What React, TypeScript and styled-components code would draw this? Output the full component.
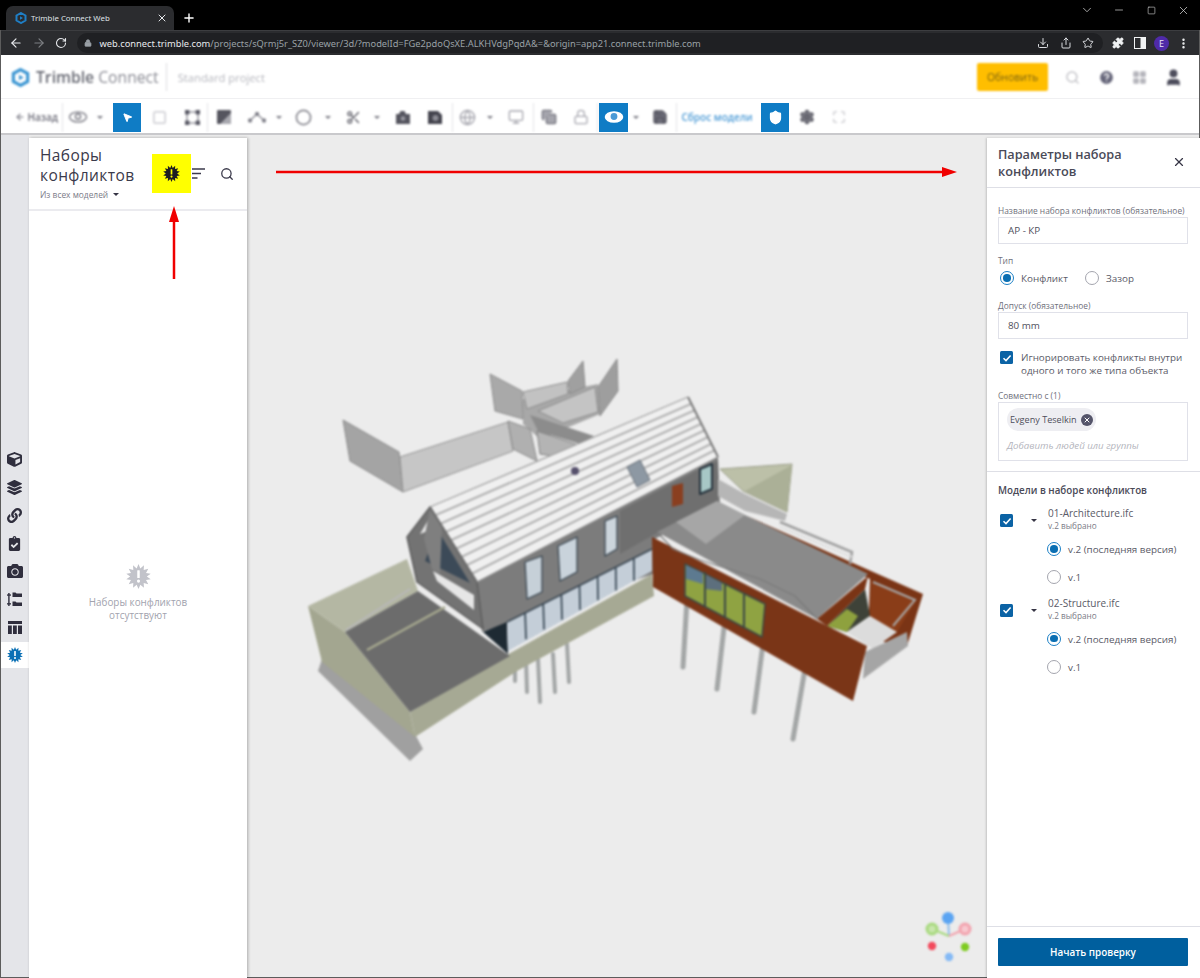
import React from 'react';
import styled, { createGlobalStyle } from 'styled-components';
import {
  ArrowLeft, ArrowRight, RotateCw, Lock, X, Plus, ChevronDown, Minus, Square, Star, Share, Download,
  Puzzle, EllipsisVertical, Search, MousePointer2, Shield, Scissors, Circle, Globe, Monitor,
  Copy, Save, Settings, Maximize, HelpCircle, User, LayoutGrid,
} from 'lucide-react';
import { FaCube, FaLayerGroup, FaLink, FaClipboardCheck, FaCamera } from 'react-icons/fa';

const Global = createGlobalStyle`
  html, body { margin: 0; padding: 0; background: #fff; }
  body { font-family: "Open Sans", "Noto Sans", sans-serif; color: #363545; }
  * { box-sizing: border-box; }
`;

const Page = styled.div`
  position: relative;
  width: 1200px;
  height: 978px;
  overflow: hidden;
  display: flex;
  flex-direction: column;
  &::after {
    content: '';
    position: absolute;
    inset: 30px 0 0 0;
    border: 1px solid #5c5c5c;
    border-top: 0;
    pointer-events: none;
  }
`;

/* ---------- browser chrome ---------- */
const TabStrip = styled.div`
  height: 30px;
  flex: none;
  background: #000;
  display: flex;
  align-items: flex-end;
  padding-left: 6px;
  color: #e8eaed;
`;
const Tab = styled.div`
  width: 168px;
  height: 24px;
  background: #2b2c2f;
  border-radius: 7px 7px 0 0;
  display: flex;
  align-items: center;
  padding: 0 6px 0 9px;
  gap: 4px;
  font-size: 7.85px;
  font-family: "Noto Sans", sans-serif;
`;
const TabTitle = styled.span`
  flex: 1;
  color: #dfe1e5;
`;
const NewTab = styled.div`
  width: 30px;
  height: 24px;
  display: flex;
  align-items: center;
  justify-content: center;
`;
const WindowButtons = styled.div`
  margin-left: auto;
  align-self: flex-start;
  height: 20px;
  display: flex;
  align-items: center;
  padding-right: 1px;
`;
const WinBtn = styled.div`
  width: 32px;
  display: flex;
  justify-content: center;
  color: #d4d4d4;
`;
const NavBar = styled.div`
  height: 25px;
  flex: none;
  background: #2b2c2f;
  border-top: 1px solid #3c3d40;
  display: flex;
  align-items: center;
  padding-left: 5px;
  color: #e8eaed;
`;
const NavBtn = styled.div<{ $dim?: boolean }>`
  width: 22.5px;
  display: flex;
  justify-content: center;
  color: ${(p) => (p.$dim ? '#7d7f83' : '#e8eaed')};
`;
const Omni = styled.div`
  margin: 0 4px;
  width: 1026px;
  height: 20px;
  background: #1f2023;
  border-radius: 10px;
  display: flex;
  align-items: center;
  padding: 0 3px 0 7px;
  font-size: 9.3px;
  font-family: "Noto Sans", sans-serif;
`;
const LockSlot = styled.span`
  display: flex;
  margin-right: 8px;
`;
const UrlText = styled.span`
  flex: 1;
  color: #9aa0a6;
  white-space: nowrap;
  b { color: #e8eaed; font-weight: 400; }
`;
const OmniIcon = styled.div`
  width: 22.5px;
  display: flex;
  justify-content: center;
  color: #dadce0;
`;
const Avatar = styled.div`
  width: 15px;
  height: 15px;
  border-radius: 50%;
  background: #4f2aa8;
  color: #e8e3f7;
  font-size: 9px;
  display: flex;
  align-items: center;
  justify-content: center;
`;
const ChromeEnd = styled.div`
  width: 22px;
  display: flex;
  justify-content: center;
  color: #f1f3f4;
`;

/* ---------- blurred application header ---------- */
const AppHeader = styled.div`
  height: 44px;
  background: #fff;
  display: flex;
  align-items: center;
  padding: 1px 10px 0 11px;
  border-bottom: 1px solid #f0f0f2;
  flex: none;
`;
const Soft = styled.div`
  display: flex;
  align-items: center;
  filter: blur(1.1px);
`;
const Brand = styled.span`
  font-size: 15.7px;
  color: #8a8b94;
  margin-left: 6px;
  white-space: nowrap;
  b { font-weight: 600; color: #686a74; }
`;
const BrandDivider = styled.span`
  width: 1px;
  height: 28px;
  background: #dedee2;
  margin: 0 11px 0 7px;
`;
const ProjectName = styled.span`
  font-size: 11.2px;
  color: #b4b5bc;
  white-space: nowrap;
`;
const HeaderRight = styled(Soft)`
  margin-left: auto;
`;
const Upgrade = styled.div`
  width: 71px;
  height: 28px;
  background: #ffbe00;
  border-radius: 2px;
  color: #7a6212;
  font-size: 10.5px;
  display: flex;
  align-items: center;
  justify-content: center;
  margin-right: 8px;
`;
const HeaderIcon = styled.div`
  width: 33.5px;
  display: flex;
  justify-content: center;
  color: #63636f;
`;

/* ---------- blurred toolbar ---------- */
const ToolBar = styled.div`
  height: 36px;
  flex: none;
  background: #fff;
  border-bottom: 2px solid #c9c9cc;
  display: flex;
  align-items: center;
  padding: 2px 0 0 11px;
`;
const ToolCell = styled.div<{ $w: number; $on?: boolean; $sep?: boolean }>`
  width: ${(p) => p.$w}px;
  height: 29px;
  flex: none;
  display: flex;
  align-items: center;
  justify-content: center;
  filter: blur(${(p) => (p.$on ? 0.7 : 1)}px);
  color: ${(p) => (p.$on ? '#fff' : '#6c6c78')};
  background: ${(p) => (p.$on ? '#0f7cc5' : 'transparent')};
  box-shadow: ${(p) => (p.$sep ? '1px 0 0 #e4e4e8' : 'none')};
  font-size: 10px;
`;
const ToolText = styled.span<{ $blue?: boolean }>`
  font-weight: 600;
  white-space: nowrap;
  color: ${(p) => (p.$blue ? '#4d9bd6' : '#6c6c78')};
`;
const MiniCaret = styled.span<{ $color?: string; $size?: number }>`
  display: inline-block;
  width: 0;
  height: 0;
  border-left: ${(p) => p.$size ?? 3.5}px solid transparent;
  border-right: ${(p) => p.$size ?? 3.5}px solid transparent;
  border-top: ${(p) => p.$size ?? 3.5}px solid ${(p) => p.$color ?? '#7a7a84'};
`;

/* ---------- workspace ---------- */
const Main = styled.div`
  flex: 1;
  min-height: 0;
  display: flex;
  background: #ececec;
`;
const Rail = styled.nav`
  width: 29px;
  flex: none;
  background: #e4e5e9;
  padding-top: 310px;
  display: flex;
  flex-direction: column;
`;
const RailItem = styled.div<{ $on?: boolean }>`
  height: ${(p) => (p.$on ? 26 : 28)}px;
  margin-top: ${(p) => (p.$on ? 1 : 0)}px;
  display: flex;
  align-items: center;
  justify-content: center;
  color: ${(p) => (p.$on ? '#0b70b5' : '#2f2e3d')};
  background: ${(p) => (p.$on ? '#fff' : 'transparent')};
`;
const LeftPanel = styled.aside`
  width: 218px;
  flex: none;
  margin-top: 3px;
  background: #fff;
  box-shadow: 1px 0 3px rgba(0, 0, 0, 0.28);
  display: flex;
  flex-direction: column;
  z-index: 1;
`;
const LeftHead = styled.header`
  height: 73px;
  flex: none;
  border-bottom: 2px solid #ebebef;
  padding: 7px 0 0 11px;
  display: flex;
`;
const LeftTitles = styled.div`
  width: 112px;
  flex: none;
`;
const LeftTitle = styled.h1`
  margin: 0;
  font-size: 15.5px;
  line-height: 20px;
  font-weight: 500;
  letter-spacing: 0.4px;
  color: #3b3a4b;
`;
const Scope = styled.div`
  margin-top: 4px;
  font-size: 8.4px;
  line-height: 11px;
  color: #7b7b88;
  display: flex;
  align-items: center;
  gap: 5px;
  white-space: nowrap;
`;
const Highlight = styled.div`
  width: 39px;
  height: 39px;
  flex: none;
  background: #ffff00;
  display: flex;
  align-items: center;
  justify-content: center;
  color: #1d1d22;
  margin-top: 9px;
`;
const HeadIcon = styled.div<{ $w: number }>`
  width: ${(p) => p.$w}px;
  flex: none;
  height: 39px;
  margin-top: 9px;
  color: #3b3a4b;
  display: flex;
  align-items: center;
  justify-content: center;
`;
const Empty = styled.div`
  flex: 1;
  display: flex;
  flex-direction: column;
  align-items: center;
  justify-content: center;
  padding-bottom: 4px;
  gap: 7px;
  color: #c2c3ca;
`;
const EmptyText = styled.div`
  font-size: 9.9px;
  line-height: 13px;
  text-align: center;
  color: #a2a3ae;
`;
const Viewer = styled.main`
  flex: 1;
  min-width: 0;
  background: #ececec;
`;
const Scene = styled.svg`
  display: block;
  width: 100%;
  height: 100%;
`;
const Blurred = styled.g<{ $r?: number }>`
  filter: blur(${(p) => p.$r ?? 1.1}px);
`;

/* ---------- right panel ---------- */
const RightPanel = styled.aside`
  width: 213px;
  flex: none;
  margin-top: 3px;
  background: #fff;
  box-shadow: -1px 0 2px rgba(0, 0, 0, 0.18);
  display: flex;
  flex-direction: column;
  z-index: 1;
`;
const RightHead = styled.header`
  height: 50px;
  flex: none;
  border-bottom: 1px solid #dedfe6;
  padding: 8px 14px 0 11px;
  display: flex;
  justify-content: space-between;
`;
const RightTitle = styled.h2`
  margin: 0;
  font-size: 12.7px;
  line-height: 17px;
  font-weight: 600;
  color: #4a4a58;
`;
const CloseBtn = styled.div`
  padding-top: 6px;
  color: #363545;
`;
const Form = styled.section`
  flex: none;
  height: 284px;
  border-bottom: 1px solid #dedfe6;
  padding: 17px 12px 0 11px;
  display: flex;
  flex-direction: column;
`;
const Label = styled.label<{ $top?: number }>`
  display: block;
  font-size: 8.4px;
  line-height: 12px;
  color: #6f707c;
  white-space: nowrap;
  margin-top: ${(p) => p.$top ?? 0}px;
`;
const Input = styled.div`
  height: 27px;
  flex: none;
  border: 1px solid #e0e1e9;
  padding-left: 9px;
  font-size: 9.8px;
  display: flex;
  align-items: center;
  color: #4f4f5c;
`;
const RadioRow = styled.div`
  margin-top: 3px;
  display: flex;
  height: 16px;
  flex: none;
  align-items: center;
  padding-left: 2px;
`;
const RadioItem = styled.div<{ $w?: number }>`
  display: flex;
  align-items: center;
  gap: 7px;
  width: ${(p) => (p.$w ? p.$w + 'px' : 'auto')};
  font-size: 9.85px;
  color: #5a5a67;
  white-space: nowrap;
`;
const Radio = styled.span<{ $on?: boolean }>`
  width: 14px;
  height: 14px;
  flex: none;
  border-radius: 50%;
  border: 1.4px solid ${(p) => (p.$on ? '#1b80c6' : '#a4a5ae')};
  background: #fff;
  display: flex;
  align-items: center;
  justify-content: center;
  &::before {
    content: '';
    width: 7.5px;
    height: 7.5px;
    border-radius: 50%;
    background: ${(p) => (p.$on ? '#0b6fb3' : 'transparent')};
  }
`;
const Check = styled.span`
  width: 13px;
  height: 13px;
  flex: none;
  background: #0b63a5;
  border-radius: 1.5px;
  color: #fff;
  display: flex;
  align-items: center;
  justify-content: center;
`;
const IgnoreRow = styled.div`
  display: flex;
  gap: 8px;
  margin-top: 12px;
  padding-left: 2px;
`;
const IgnoreText = styled.div`
  font-size: 9.8px;
  line-height: 13px;
  color: #5a5a67;
  white-space: nowrap;
`;
const ShareBox = styled.div`
  height: 59px;
  flex: none;
  border: 1px solid #e0e1e9;
  padding: 5px 8px 0;
`;
const Chip = styled.div`
  width: 89px;
  height: 23px;
  border-radius: 12px;
  background: #eeeef2;
  display: flex;
  align-items: center;
  justify-content: space-between;
  padding: 0 3px 0 3px;
  font-size: 9.1px;
  color: #4f4f5c;
  white-space: nowrap;
`;
const ChipClose = styled.span`
  width: 12px;
  height: 12px;
  border-radius: 50%;
  background: #55556a;
  color: #fff;
  display: flex;
  align-items: center;
  justify-content: center;
`;
const Placeholder = styled.div`
  margin-top: 8px;
  font-size: 9.7px;
  font-style: italic;
  color: #b4b5bd;
  line-height: 13px;
  white-space: nowrap;
`;
const Models = styled.section`
  flex: 1;
  padding: 12px 11px 0;
`;
const ModelsTitle = styled.h3`
  margin: 0 0 8px;
  font-size: 9.8px;
  line-height: 14px;
  font-weight: 600;
  color: #4a4a58;
`;
const ModelBlock = styled.div`
  height: 89.5px;
`;
const ModelRow = styled.div`
  height: 29px;
  display: flex;
  align-items: center;
  padding-left: 2px;
`;
const CaretSlot = styled.div`
  width: 35px;
  padding-left: 18px;
  display: flex;
`;
const ModelName = styled.div`
  font-size: 10px;
  line-height: 13px;
  color: #5a5a67;
  white-space: nowrap;
  margin-top: -3px;
`;
const ModelSub = styled.div`
  font-size: 8.2px;
  line-height: 11px;
  color: #7a7b86;
`;
const VersionRow = styled.div`
  height: 28px;
  padding-left: 49px;
  display: flex;
  align-items: center;
`;
const Footer = styled.footer`
  height: 52px;
  flex: none;
  border-top: 1px solid #dedfe6;
  padding: 11px 12px 0 11px;
`;
const Primary = styled.div`
  height: 28px;
  background: #005f9e;
  border-radius: 1px;
  color: #fff;
  font-size: 9.9px;
  font-weight: 600;
  display: flex;
  align-items: center;
  justify-content: center;
`;
const Annotation = styled.svg`
  position: absolute;
  left: 0;
  top: 0;
  width: 1200px;
  height: 978px;
  pointer-events: none;
  z-index: 5;
`;

/* ---------- drawings ---------- */
const burst = (() => {
  const pts: string[] = [];
  const n = 14;
  for (let i = 0; i < n * 2; i++) {
    const r = i % 2 ? 8 : 12;
    const a = (Math.PI * i) / n;
    pts.push(`${(12 + r * Math.sin(a)).toFixed(2)},${(12 - r * Math.cos(a)).toFixed(2)}`);
  }
  return pts.join(' ');
})();

const ConflictIcon = ({ size, bang = '#fff' }: { size: number; bang?: string }) => (
  <svg width={size} height={size} viewBox="0 0 24 24" fill="currentColor">
    <polygon points={burst} />
    <rect x="10.8" y="6" width="2.4" height="7.5" rx="0.5" fill={bang} />
    <circle cx="12" cy="16.4" r="1.5" fill={bang} />
  </svg>
);

const HexLogo = ({ size, color }: { size: number; color: string }) => (
  <svg width={size} height={size} viewBox="0 0 24 24">
    <polygon points="12,2 21,7 21,17 12,22 3,17 3,7" fill="none" stroke={color} strokeWidth="4" />
    <polygon points="10,8.5 16,12 10,15.5" fill={color} />
  </svg>
);

const SortIcon = () => (
  <svg width="15" height="13" viewBox="0 0 15 13" stroke="currentColor" strokeWidth="1.4">
    <path d="M0 2h13M0 6.5h9M0 11h5.5" />
  </svg>
);

const TreeIcon = () => (
  <svg width="17" height="17" viewBox="0 0 17 17" fill="currentColor">
    <rect x="2.2" y="2" width="1.4" height="13" />
    <rect x="1" y="3.4" width="4" height="1.3" />
    <rect x="1" y="12.2" width="4" height="1.3" />
    <path d="M6.5 1.5h3l1 1H16V6H6.5zM6.5 10.5h3l1 1H16V15H6.5z" />
  </svg>
);

const TableIcon = () => (
  <svg width="16" height="15" viewBox="0 0 16 15" fill="currentColor">
    <rect x="1" y="1" width="14" height="3" />
    <rect x="1" y="5.5" width="3.8" height="8.5" />
    <rect x="6" y="5.5" width="3.8" height="8.5" />
    <rect x="11" y="5.5" width="4" height="8.5" />
  </svg>
);

const SidePanelIcon = () => (
  <svg width="12" height="12" viewBox="0 0 12 12">
    <rect x="0.5" y="0.5" width="11" height="11" fill="none" stroke="#f1f3f4" />
    <rect x="6.5" y="0.5" width="5" height="11" fill="#f1f3f4" />
  </svg>
);

const Tick = () => (
  <svg width="10" height="10" viewBox="0 0 10 10" fill="none" stroke="#fff" strokeWidth="1.5">
    <path d="M1.5 5.2l2.5 2.4 4.6-5" />
  </svg>
);

/* toolbar glyphs */
const ViewIcon = ({ fill = 'none', stroke = '#8b8b93', pupil = 'none' }: { fill?: string; stroke?: string; pupil?: string }) => (
  <svg width="20" height="14" viewBox="0 0 20 14" fill={fill} stroke={stroke} strokeWidth="1.6">
    <ellipse cx="10" cy="7" rx="8.5" ry="5" />
    <circle cx="10" cy="6.5" r="2.6" fill={pupil} stroke={pupil === 'none' ? stroke : pupil} />
  </svg>
);
const FrameIcon = () => (
  <svg width="17" height="17" viewBox="0 0 17 17" fill="#5a5a66">
    <rect x="3" y="3" width="11" height="11" fill="none" stroke="#9b9ba3" strokeWidth="1.5" />
    <rect x="1" y="1" width="4.4" height="4.4" />
    <rect x="11.6" y="1" width="4.4" height="4.4" />
    <rect x="1" y="11.6" width="4.4" height="4.4" />
    <rect x="11.6" y="11.6" width="4.4" height="4.4" />
  </svg>
);
const ShadeIcon = () => (
  <svg width="16" height="16" viewBox="0 0 16 16">
    <rect x="1" y="1" width="14" height="14" rx="1" fill="#55555f" />
    <polygon points="15,4 15,15 4,15" fill="#a9a9b0" />
  </svg>
);
const MeasureIcon = () => (
  <svg width="18" height="12" viewBox="0 0 18 12" fill="#6c6c78" stroke="#8e8e96" strokeWidth="1.3">
    <path d="M2 9.5L9 3l7 6.5" fill="none" />
    <circle cx="2" cy="9.5" r="1.6" />
    <circle cx="9" cy="3" r="1.6" />
    <circle cx="16" cy="9.5" r="1.6" />
  </svg>
);
const CameraBlob = () => (
  <svg width="16" height="16" viewBox="0 0 16 16" fill="#55555f">
    <path d="M1 5h3l1.5-3h4L11 5h4v10H1z" />
    <circle cx="8" cy="9.5" r="2.2" fill="#9a9aa2" />
  </svg>
);
const SheetBlob = () => (
  <svg width="16" height="16" viewBox="0 0 16 16">
    <path d="M1 2h10l4 4v9H1z" fill="#44444e" />
    <circle cx="8.5" cy="9" r="3" fill="#8b8b94" />
  </svg>
);

const lerp = (a: number[], b: number[], t: number) => [a[0] + (b[0] - a[0]) * t, a[1] + (b[1] - a[1]) * t];
const A = [430, 508];
const B = [688, 398];
const C = [718, 458];
const D = [477, 583];
const stripes = Array.from({ length: 8 }, (_, i) => {
  const t = (i + 1) / 9;
  return { p: lerp(A, D, t), q: lerp(B, C, t) };
});
const glassBars = Array.from({ length: 7 }, (_, i) => {
  const t = (i + 1) / 8;
  return { p: lerp([507, 623], [652, 550], t), q: lerp([508, 650], [652, 572], t) };
});

const Poly = ({ d, f, s, w }: { d: string; f: string; s?: string; w?: number }) => (
  <polygon points={d} fill={f} stroke={s ?? 'none'} strokeWidth={w ?? 0} strokeLinejoin="round" />
);

const Pillar = ({ x1, y1, x2, y2, w = 4 }: { x1: number; y1: number; x2: number; y2: number; w?: number }) => (
  <line x1={x1} y1={y1} x2={x2} y2={y2} stroke="#a3a6a6" strokeWidth={w} strokeLinecap="round" />
);

const Building = () => (
  <Blurred $r={1.15}>
    {/* detached walls */}
    <Poly d="523,400 598,385 600,415 540,440 523,425" f="#a8a8a8" />
    <Poly d="490,375 522,392 523,420 495,412" f="#a9a9a9" s="#8e8e8e" w={1} />
    <Poly d="523,393 567,383 568,395 527,410" f="#c2c2c2" s="#8e8e8e" w={1} />
    <Poly d="568,382 583,362 585,388 570,395" f="#a0a0a0" s="#8a8a8a" w={1} />
    <Poly d="538,412 595,388 598,413 563,424" f="#c4c4c4" s="#8e8e8e" w={1} />
    <Poly d="598,388 617,360 618,392 600,417" f="#9e9e9e" s="#8a8a8a" w={1} />
    <Poly d="530,416 594,437 580,445 538,432" f="#8c8c8c" />
    <Poly d="537,432 578,446 560,458 540,455" f="#b4b4b4" s="#808080" w={1} />
    <Poly d="343,421 399,453 403,493 350,462" f="#a4a4a4" s="#8b8b8b" w={1} />
    <Poly d="400,458 508,423 513,452 403,493" f="#c6c6c6" s="#939393" w={1} />
    <Poly d="508,422 530,430 537,462 513,450" f="#b0b0b0" s="#8b8b8b" w={1} />

    {/* deck */}
    <Poly d="322,660 415,735 423,750 410,762 318,672" f="#a0a0a0" />
    <Pillar x1={515} y1={660} x2={515} y2={682} />
    <Pillar x1={526} y1={660} x2={527} y2={693} />
    <Pillar x1={538} y1={660} x2={540} y2={703} />
    <Pillar x1={553} y1={655} x2={555} y2={693} />
    <Pillar x1={567} y1={645} x2={569} y2={683} />
    <Poly d="410,713 505,657 652,575 654,597 517,672 415,738" f="#a6a994" />
    <Poly d="308,607 345,633 410,713 415,738 322,663" f="#a3a690" />
    <Poly d="308,607 407,560 418,592 345,633" f="#b4b7a3" />
    <Poly d="345,633 418,592 510,657 410,713" f="#6c6c6c" />
    <line x1="367" y1="651" x2="445" y2="608" stroke="#a6a88f" strokeWidth="2.5" />
    <line x1="346" y1="631" x2="410" y2="590" stroke="#b8b8b8" strokeWidth="2" />

    {/* house */}
    <Poly d="477,583 718,458 720,505 655,540 653,575 482,633" f="#7c7c7c" />
    <Poly d="430,508 407,538 417,583 483,630 477,583" f="#737373" s="#5e5e5e" w={1.5} />
    <Poly d="437,530 470,584 425,562" f="#3c4a58" />
    <Poly d="420,535 430,518 438,528" f="#e8e8e8" />
    <Poly d="433,572 474,596 474,611 437,582" f="#e6e6e6" />
    <Poly d="430,510 424,540 432,570 440,575 442,528" f="#7f7f7f" />
    <Poly d="483,633 507,623 508,655" f="#1e2a33" />
    <Poly d="507,623 652,550 652,572 508,652" f="#c4ced8" />
    {glassBars.map((b, i) => (
      <line key={i} x1={b.p[0]} y1={b.p[1]} x2={b.q[0]} y2={b.q[1]} stroke="#2f3f4c" strokeWidth="1.6" />
    ))}
    <line x1="507" y1="623" x2="652" y2="550" stroke="#3b4853" strokeWidth="1.5" />
    <Poly d="525,563 542,557 542,593 527,600" f="#c6d0d8" s="#37444f" w={1.2} />
    <Poly d="558,547 577,538 577,573 560,582" f="#c9d3db" s="#37444f" w={1.2} />
    <Poly d="605,522 617,517 617,550 605,557" f="#ccd5dc" s="#37444f" w={1.2} />
    <Poly d="620,512 700,470 718,462 718,505 655,535 620,555" f="#6f6f6f" />
    <Poly d="700,470 712,465 712,490 700,495" f="#a7c7c6" s="#26333d" w={2} />
    <Poly d="672,487 683,484 683,505 672,508" f="#8a3f20" />

    {/* roof */}
    <Poly d="430,508 688,398 718,458 477,583" f="#f0f0f0" />
    {stripes.map((s, i) => (
      <line key={i} x1={s.p[0]} y1={s.p[1]} x2={s.q[0]} y2={s.q[1]} stroke="#b4b4b4" strokeWidth="2.2" />
    ))}
    <line x1={A[0]} y1={A[1]} x2={B[0]} y2={B[1]} stroke="#a2a2a2" strokeWidth="1.3" />
    <line x1={B[0]} y1={B[1]} x2={C[0]} y2={C[1]} stroke="#777" strokeWidth="2" />
    <line x1={A[0]} y1={A[1]} x2={D[0]} y2={D[1]} stroke="#6c6c6c" strokeWidth="2" />
    <line x1={D[0]} y1={D[1]} x2={C[0]} y2={C[1]} stroke="#8f8f8f" strokeWidth="1.4" />
    <circle cx="575" cy="472" r="4" fill="#56506c" />
    <Poly d="627,468 640,461 650,481 637,488" f="#8d98a3" s="#6c737b" w={1} />

    {/* extension */}
    <Poly d="720,470 792,465 787,513 743,492" f="#bcc0a8" s="#9a9d89" w={1} />
    <Poly d="792,466 745,492 787,513" f="#abb097" />
    <Poly d="718,480 745,495 787,515 785,522 745,512 718,497" f="#b6b6b6" />
    <Pillar x1={687} y1={600} x2={683} y2={668} w={5} />
    <Pillar x1={725} y1={620} x2={717} y2={690} w={5} />
    <Pillar x1={763} y1={645} x2={754} y2={713} w={5} />
    <Pillar x1={805} y1={670} x2={793} y2={740} w={5} />
    <Poly d="747,517 923,595 907,647 868,640 870,580" f="#7a3415" />
    <Poly d="871,582 915,603 897,633 870,617" f="#8a3d18" />
    <Poly d="827,627 865,590 870,617 847,633" f="#3e4238" />
    <Poly d="827,627 847,610 858,617 847,633" f="#8ea13e" />
    <Poly d="847,633 870,617 897,633 873,650" f="#dcdcdc" />
    <Poly d="865,653 907,633 908,647 863,680" f="#a5a5a5" />
    <Poly d="657,533 717,502 747,517 868,575 817,620" f="#8a8a8a" />
    <Poly d="676,523 717,502 745,516 706,545" f="#a6a6a6" />
    <Poly d="817,620 868,577 865,590 827,627" f="#7a3415" />
    <Poly d="652,538 867,647 853,702 653,588" f="#7a3517" />
    <Poly d="685,565 765,605 762,638 685,597" f="#8fa342" s="#3d4a44" w={1.5} />
    <Poly d="686,566 703,574 703,585 686,580" f="#5d7a90" />
    <Poly d="705,575 722,584 722,592 705,590" f="#5d6f7d" />
    <line x1="705" y1="573" x2="705" y2="608" stroke="#3d4a44" strokeWidth="2" />
    <line x1="725" y1="584" x2="725" y2="618" stroke="#3d4a44" strokeWidth="2" />
    <line x1="744" y1="594" x2="744" y2="628" stroke="#3d4a44" strokeWidth="2" />
    <polyline points="657,533 673,550 700,561 760,580 795,597 817,620" fill="none" stroke="#7a7a7a" strokeWidth="1.2" />
    <polyline points="780,523 852,553 850,565" fill="none" stroke="#a0a0a0" strokeWidth="2.5" />
    <line x1="780" y1="528" x2="852" y2="558" stroke="#dfdfdf" strokeWidth="1.5" />
    <polyline points="873,583 915,601 893,627" fill="none" stroke="#a8a8a8" strokeWidth="2" />
  </Blurred>
);

const ConnectLogo = () => (
  <Blurred $r={1}>
    <path d="M949 937L948 919" stroke="#8dbcec" strokeWidth="2" />
    <path d="M949 937L932 930" stroke="#a8d97f" strokeWidth="2" />
    <path d="M949 937L965 930" stroke="#f2a3ae" strokeWidth="2" />
    <circle cx="948" cy="919" r="6" fill="#5ba4f2" />
    <circle cx="932" cy="930" r="5" fill="#c8e6ac" stroke="#a8d97f" strokeWidth="3" />
    <circle cx="965" cy="930" r="5" fill="#f7c8cf" stroke="#f2a3ae" strokeWidth="3" />
    <circle cx="932" cy="947" r="4.2" fill="#f24a5c" />
    <circle cx="965" cy="948" r="4.2" fill="#7ecb20" />
    <circle cx="949" cy="958" r="4.2" fill="#84b9f5" />
  </Blurred>
);

type Tool = { w: number; node?: React.ReactNode; on?: boolean; sep?: boolean };
const ti = { size: 15, strokeWidth: 2 };
const caret: React.ReactNode = <MiniCaret />;
const tools: Tool[] = [
  { w: 51, sep: true, node: <><ArrowLeft size={10} strokeWidth={2.5} /><ToolText>&nbsp;Назад</ToolText></> },
  { w: 32, node: <ViewIcon /> },
  { w: 12, node: caret },
  { w: 7 },
  { w: 28, on: true, node: <MousePointer2 size={11} fill="#fff" /> },
  { w: 36, node: <Square size={15} color="#c4c4ca" /> },
  { w: 30, sep: true, node: <FrameIcon /> },
  { w: 34, node: <ShadeIcon /> },
  { w: 32, node: <MeasureIcon /> },
  { w: 12, node: caret },
  { w: 37, node: <Circle size={17} strokeWidth={2.4} color="#8a8a92" /> },
  { w: 12, node: caret },
  { w: 38, node: <Scissors {...ti} color="#55555f" /> },
  { w: 10, node: caret },
  { w: 42, node: <CameraBlob /> },
  { w: 22, node: <SheetBlob /> },
  { w: 6, sep: true },
  { w: 30, node: <Globe size={17} color="#a8a8b0" /> },
  { w: 16, node: caret },
  { w: 35, sep: true, node: <Monitor size={16} color="#a8a8b0" /> },
  { w: 32, node: <Copy size={16} color="#75757f" fill="#a5a5ad" /> },
  { w: 32, sep: true, node: <Lock size={16} color="#aaaab2" /> },
  { w: 2 },
  { w: 29, on: true, node: <ViewIcon fill="#fff" stroke="#fff" pupil="#4b9ad6" /> },
  { w: 16, node: caret },
  { w: 32, sep: true, node: <Save size={16} fill="#6c6c78" color="#55555f" /> },
  { w: 82, node: <ToolText $blue>Сброс модели</ToolText> },
  { w: 3 },
  { w: 28, on: true, node: <Shield size={15} fill="#fff" color="#fff" /> },
  { w: 36, node: <Settings size={16} color="#55555f" fill="#7d7d87" /> },
  { w: 28, node: <Maximize size={14} color="#c0c0c6" /> },
];

const railIcons: React.ReactNode[] = [
  <FaCube size={15} />,
  <FaLayerGroup size={15} />,
  <FaLink size={15} />,
  <FaClipboardCheck size={15} />,
  <FaCamera size={16} />,
  <TreeIcon />,
  <TableIcon />,
];

const models = ['01-Architecture.ifc', '02-Structure.ifc'];

export default function App() {
  return (
    <Page>
      <Global />
      <TabStrip>
        <Tab>
          <HexLogo size={12} color="#1f7fc6" />
          <TabTitle>Trimble Connect Web</TabTitle>
          <X size={12} color="#e8eaed" />
        </Tab>
        <NewTab><Plus size={14} strokeWidth={2.4} color="#fff" /></NewTab>
        <WindowButtons>
          <WinBtn><ChevronDown size={14} strokeWidth={1.3} /></WinBtn>
          <WinBtn><Minus size={12} strokeWidth={1.4} /></WinBtn>
          <WinBtn><Square size={9} strokeWidth={1.6} /></WinBtn>
          <WinBtn><X size={13} strokeWidth={1.4} /></WinBtn>
        </WindowButtons>
      </TabStrip>
      <NavBar>
        <NavBtn><ArrowLeft size={14} strokeWidth={2} /></NavBtn>
        <NavBtn $dim><ArrowRight size={14} strokeWidth={2} /></NavBtn>
        <NavBtn><RotateCw size={12} strokeWidth={2.2} /></NavBtn>
        <Omni>
          <LockSlot><Lock size={8} fill="#9aa0a6" color="#9aa0a6" /></LockSlot>
          <UrlText>
            <b>web.connect.trimble.com</b>/projects/sQrmj5r_SZ0/viewer/3d/?modelId=FGe2pdoQsXE.ALKHVdgPqdA&amp;=&amp;origin=app21.connect.trimble.com
          </UrlText>
          <OmniIcon><Download size={12} /></OmniIcon>
          <OmniIcon><Share size={12} /></OmniIcon>
          <OmniIcon><Star size={12} strokeWidth={2} /></OmniIcon>
        </Omni>
        <ChromeEnd><Puzzle size={12} fill="#f1f3f4" /></ChromeEnd>
        <ChromeEnd><SidePanelIcon /></ChromeEnd>
        <ChromeEnd><Avatar>E</Avatar></ChromeEnd>
        <ChromeEnd><EllipsisVertical size={13} strokeWidth={2.5} /></ChromeEnd>
      </NavBar>

      <AppHeader>
        <Soft>
          <HexLogo size={19} color="#3d97d3" />
          <Brand><b>Trimble</b> Connect</Brand>
          <BrandDivider />
          <ProjectName>Standard project</ProjectName>
        </Soft>
        <HeaderRight>
          <Upgrade>Обновить</Upgrade>
          <HeaderIcon><Search size={15} color="#b9b9bf" /></HeaderIcon>
          <HeaderIcon><HelpCircle size={17} fill="#66667a" color="#fff" /></HeaderIcon>
          <HeaderIcon><LayoutGrid size={15} color="#b5b5bc" fill="#b5b5bc" /></HeaderIcon>
          <HeaderIcon><User size={19} fill="#4d4d5c" color="#4d4d5c" /></HeaderIcon>
        </HeaderRight>
      </AppHeader>

      <ToolBar>
        {tools.map((t, i) => (
          <ToolCell key={i} $w={t.w} $on={t.on} $sep={t.sep}>{t.node}</ToolCell>
        ))}
      </ToolBar>

      <Main>
        <Rail>
          {railIcons.map((icon, i) => (
            <RailItem key={i}>{icon}</RailItem>
          ))}
          <RailItem $on><ConflictIcon size={16} /></RailItem>
        </Rail>

        <LeftPanel>
          <LeftHead>
            <LeftTitles>
              <LeftTitle>Наборы конфликтов</LeftTitle>
              <Scope>Из всех моделей <MiniCaret $color="#363545" $size={3.5} /></Scope>
            </LeftTitles>
            <Highlight><ConflictIcon size={17} bang="#ffff00" /></Highlight>
            <HeadIcon $w={16}><SortIcon /></HeadIcon>
            <HeadIcon $w={40}><Search size={14} strokeWidth={2.2} /></HeadIcon>
          </LeftHead>
          <Empty>
            <ConflictIcon size={25} />
            <EmptyText>Наборы конфликтов<br />отсутствуют</EmptyText>
          </Empty>
        </LeftPanel>

        <Viewer>
          <Scene viewBox="247 136 740 842" preserveAspectRatio="xMinYMin meet">
            <Building />
            <ConnectLogo />
          </Scene>
        </Viewer>

        <RightPanel>
          <RightHead>
            <RightTitle>Параметры набора<br />конфликтов</RightTitle>
            <CloseBtn><X size={14} strokeWidth={2} /></CloseBtn>
          </RightHead>
          <Form>
            <Label>Название набора конфликтов (обязательное)</Label>
            <Input>АР - КР</Input>
            <Label $top={11}>Тип</Label>
            <RadioRow>
              <RadioItem $w={85}><Radio $on />Конфликт</RadioItem>
              <RadioItem><Radio />Зазор</RadioItem>
            </RadioRow>
            <Label $top={14}>Допуск (обязательное)</Label>
            <Input>80 mm</Input>
            <IgnoreRow>
              <Check><Tick /></Check>
              <IgnoreText>Игнорировать конфликты внутри<br />одного и того же типа объекта</IgnoreText>
            </IgnoreRow>
            <Label $top={13}>Совместно с (1)</Label>
            <ShareBox>
              <Chip>
                Evgeny Teselkin
                <ChipClose><X size={8} strokeWidth={3} /></ChipClose>
              </Chip>
              <Placeholder>Добавить людей или группы</Placeholder>
            </ShareBox>
          </Form>
          <Models>
            <ModelsTitle>Модели в наборе конфликтов</ModelsTitle>
            {models.map((m) => (
              <ModelBlock key={m}>
                <ModelRow>
                  <Check><Tick /></Check>
                  <CaretSlot><MiniCaret $color="#363545" $size={3.5} /></CaretSlot>
                  <div>
                    <ModelName>{m}</ModelName>
                    <ModelSub>v.2 выбрано</ModelSub>
                  </div>
                </ModelRow>
                <VersionRow><RadioItem><Radio $on />v.2 (последняя версия)</RadioItem></VersionRow>
                <VersionRow><RadioItem><Radio />v.1</RadioItem></VersionRow>
              </ModelBlock>
            ))}
          </Models>
          <Footer><Primary>Начать проверку</Primary></Footer>
        </RightPanel>
      </Main>

      <Annotation viewBox="0 0 1200 978">
        <path d="M276 172H945" stroke="#f00000" strokeWidth="2.5" />
        <polygon points="957,172 942,167 942,177" fill="#f00000" />
        <path d="M174 279V218" stroke="#f00000" strokeWidth="2.5" />
        <polygon points="174,206 169,222 179,222" fill="#f00000" />
      </Annotation>
    </Page>
  );
}
